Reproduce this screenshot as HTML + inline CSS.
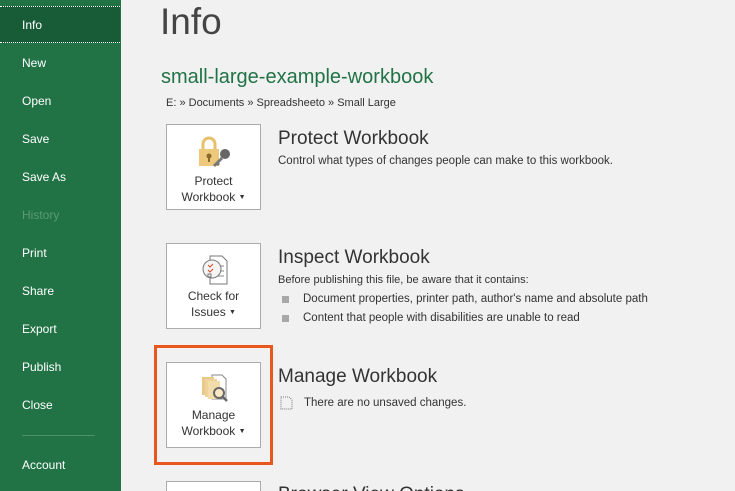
<!DOCTYPE html>
<html style="width:735px;height:491px;overflow:hidden"><head><style>
body{margin:0;width:735px;height:491px;overflow:hidden;background:#f1f1f1;font-family:"Liberation Sans",sans-serif;position:relative}
.sb{position:absolute;left:0;top:0;width:121px;height:491px;background:#217346}
.it{position:absolute;left:22px;color:#fff;font-size:12px}
.sel{position:absolute;left:0;top:6px;width:120px;height:37px;background:#185c37;border-top:1px dotted #fff;border-bottom:1px dotted #fff;box-sizing:border-box}
.box{position:absolute;left:166px;width:95px;height:86px;background:#fff;border:1px solid #ababab;box-sizing:border-box;text-align:center;font-size:12px;color:#333;line-height:16px}
.h{position:absolute;left:278px;font-size:19px;color:#333}
.t{position:absolute;font-size:11.5px;color:#333}
.sq{position:absolute;left:282px;width:7px;height:7px;background:#a8a8a8}
.ar{font-size:7px;vertical-align:2px}
</style></head><body>
<div class="sb"></div>
<div class="sel"></div>
<div class="it" style="top:18px">Info</div>
<div class="it" style="top:56px">New</div>
<div class="it" style="top:94px">Open</div>
<div class="it" style="top:132px">Save</div>
<div class="it" style="top:170px">Save As</div>
<div class="it" style="top:208px;color:#5b9a76">History</div>
<div class="it" style="top:246px">Print</div>
<div class="it" style="top:284px">Share</div>
<div class="it" style="top:322px">Export</div>
<div class="it" style="top:360px">Publish</div>
<div class="it" style="top:398px">Close</div>
<div style="position:absolute;left:22px;top:435px;width:73px;height:1px;background:#4e9068"></div>
<div class="it" style="top:458px">Account</div>

<div style="position:absolute;left:160px;top:1px;font-size:37px;color:#444;font-weight:300">Info</div>
<div style="position:absolute;left:161px;top:66px;font-size:20px;color:#217346">small-large-example-workbook</div>
<div class="t" style="left:166px;top:97px;font-size:11px">E: » Documents » Spreadsheeto » Small Large</div>

<div class="box" style="top:124px">
<svg width="40" height="36" style="margin-top:10px" viewBox="0 0 40 36"><path d="M9 14V9a6 6 0 0 1 12 0v5" fill="none" stroke="#e8bf6a" stroke-width="3"/><rect x="5" y="14" width="20" height="17" fill="#eec97c"/><circle cx="15" cy="21" r="2.5" fill="#8a6a2a"/><rect x="14" y="22" width="2" height="5" fill="#8a6a2a"/><circle cx="31" cy="19" r="5" fill="#666"/><path d="M27 22l-8 8 2 2 2-2 1 1 2-2-1-1 4-4" fill="#777"/></svg>
<div style="margin-top:-2px">Protect<br>Workbook <span class="ar">▼</span></div></div>
<div class="h" style="top:128px">Protect Workbook</div>
<div class="t" style="left:278px;top:155px">Control what types of changes people can make to this workbook.</div>

<div class="box" style="top:243px">
<svg width="40" height="32" style="margin-top:10px" viewBox="0 0 40 32"><path d="M16 2h12l5 5v23H16z" fill="#fff" stroke="#777"/><path d="M24 12h6M24 17h6M24 22h6" stroke="#888"/><circle cx="18" cy="15" r="9" fill="#f4f4f4" stroke="#777"/><path d="M14 11l2 2 3-3M14 16l2 2 3-3" stroke="#d04a2a" fill="none"/><rect x="14" y="20" width="3" height="3" fill="none" stroke="#777"/></svg>
<div style="margin-top:-2px">Check for<br>Issues <span class="ar">▼</span></div></div>
<div class="h" style="top:247px">Inspect Workbook</div>
<div class="t" style="left:278px;top:274px;font-size:11px">Before publishing this file, be aware that it contains:</div>
<div class="sq" style="top:296px"></div>
<div class="t" style="left:303px;top:293px">Document properties, printer path, author's name and absolute path</div>
<div class="sq" style="top:315px"></div>
<div class="t" style="left:303px;top:312px">Content that people with disabilities are unable to read</div>

<div style="position:absolute;left:154px;top:345px;width:119px;height:120px;border:3px solid #e8571d;box-sizing:border-box"></div>
<div class="box" style="top:362px">
<svg width="40" height="34" style="margin-top:10px" viewBox="0 0 40 34"><path d="M18 2h10l4 4v20H18z" fill="#fff" stroke="#888"/><rect x="8" y="4" width="12" height="18" fill="#e8c98a"/><rect x="11" y="6" width="12" height="18" fill="#eed29a"/><rect x="14" y="8" width="12" height="18" fill="#f2dcaa"/><circle cx="25" cy="20" r="5" fill="#fbe9c4" stroke="#666" stroke-width="2"/><path d="M29 24l4 4" stroke="#666" stroke-width="2.5"/></svg>
<div style="margin-top:-4px">Manage<br>Workbook <span class="ar">▼</span></div></div>
<div class="h" style="top:366px">Manage Workbook</div>
<svg style="position:absolute;left:279px;top:395px" width="16" height="16"><path d="M2 2h8l3 3v9H2z" fill="none" stroke="#777" stroke-dasharray="1 1"/></svg>
<div class="t" style="left:304px;top:397px">There are no unsaved changes.</div>

<div class="box" style="top:481px;height:10px;border-bottom:none"></div>
<div class="h" style="top:484px">Browser View Options</div>
</body></html>
